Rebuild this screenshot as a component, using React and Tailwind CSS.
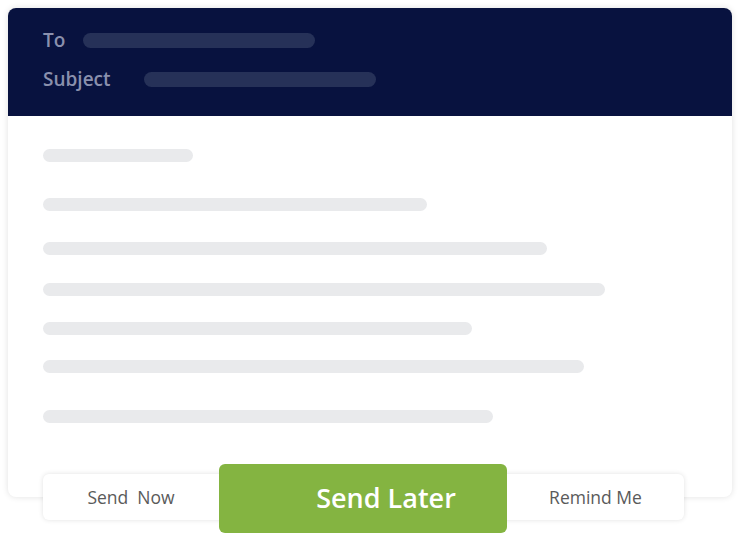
import React from 'react';

const lines = [
  { w: 'w-[150px]', mt: 'mt-[33px]' },
  { w: 'w-[384px]', mt: 'mt-[36px]' },
  { w: 'w-[504px]', mt: 'mt-[31px]' },
  { w: 'w-[562px]', mt: 'mt-[28px]' },
  { w: 'w-[429px]', mt: 'mt-[26px]' },
  { w: 'w-[541px]', mt: 'mt-[25px]' },
  { w: 'w-[450px]', mt: 'mt-[37px]' },
];

const App = () => {
  return (
    <div className="w-[740px] h-[534px] bg-white overflow-hidden p-2 font-['Open_Sans','Noto_Sans',sans-serif]">
      {/* Email card */}
      <div className="h-[489px] w-[724px] rounded-lg bg-white shadow-[0_0_6px_rgba(0,0,0,0.12)] overflow-hidden">
        <div className="h-[108px] bg-[#08123f] pl-[35px] pt-[20px] flex flex-col gap-[15px]">
          <div className="h-[24px] flex items-center">
            <span className="w-[40px] text-[19px] font-semibold text-[#8a90ad] leading-none">To</span>
            <div className="h-[15px] w-[232px] rounded-full bg-[#263158]" />
          </div>
          <div className="h-[24px] flex items-center">
            <span className="w-[101px] text-[19px] font-semibold text-[#8a90ad] leading-none">Subject</span>
            <div className="h-[15px] w-[232px] rounded-full bg-[#263158]" />
          </div>
        </div>
        <div className="pl-[35px] flex flex-col">
          {lines.map((l, i) => (
            <div key={i} className={`${l.mt} ${l.w} h-[13px] rounded-full bg-[#e9eaec]`} />
          ))}
        </div>
      </div>

      {/* Action buttons */}
      <div className="-mt-[23px] ml-[35px] w-[641px] h-[46px] flex items-center rounded-md bg-white shadow-[0_0_5px_rgba(0,0,0,0.12)]">
        <div className="w-[176px] text-center text-[17.5px] text-[#5a5a5a] whitespace-pre">Send  Now</div>
        <div className="w-[288px] h-[69px] mt-[2px] shrink-0 rounded-md bg-[#84b441] flex items-center justify-center pl-[46px] text-[27px] font-semibold text-white">
          Send Later
        </div>
        <div className="w-[177px] text-center text-[17.5px] text-[#5a5a5a]">Remind Me</div>
      </div>
    </div>
  );
};

export default App;
